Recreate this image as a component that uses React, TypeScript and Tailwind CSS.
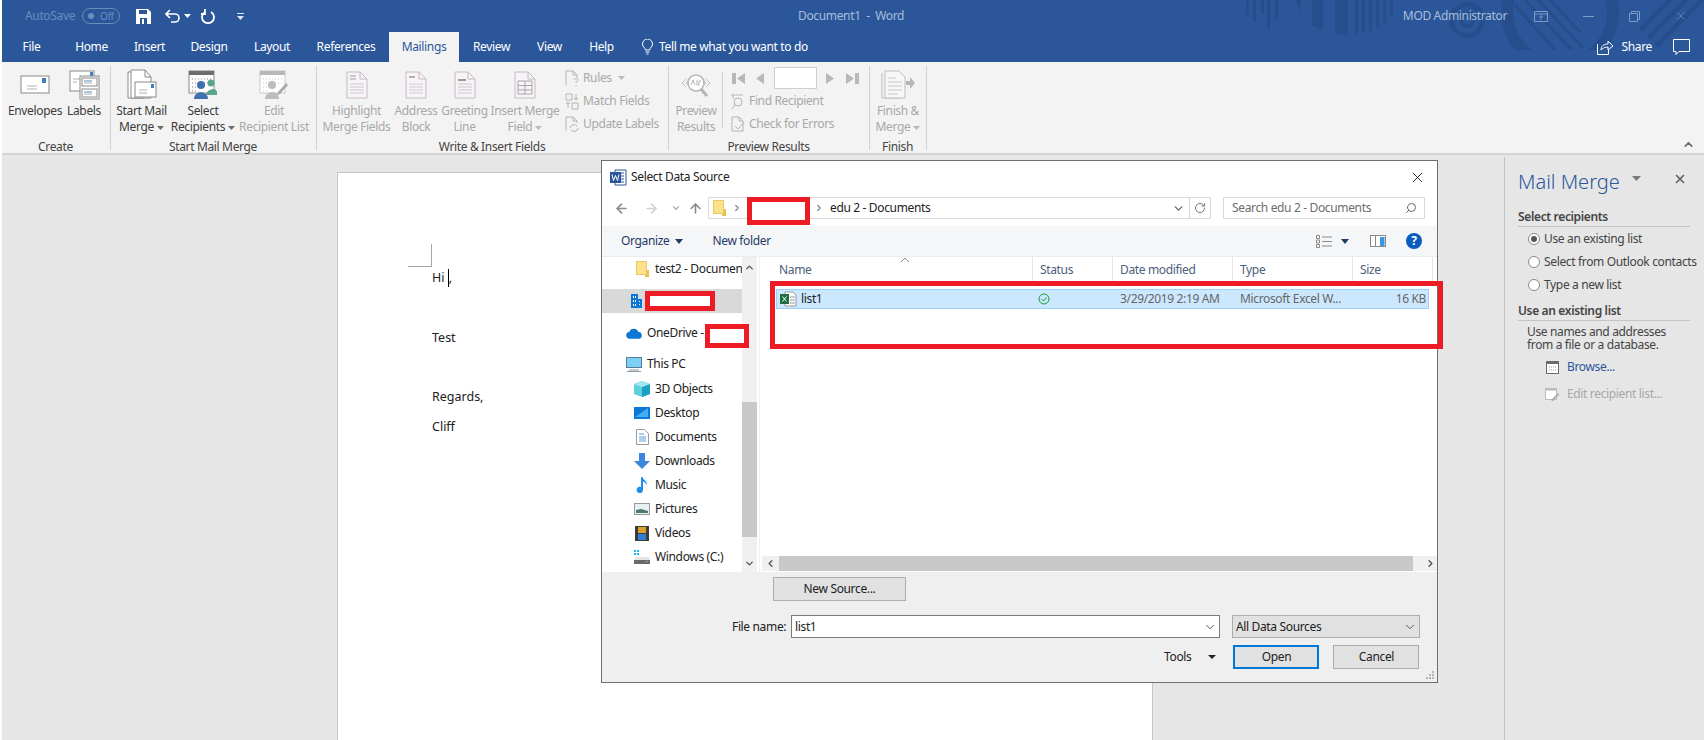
import type { ReactNode } from 'react';
import { ChevronDown, ChevronUp, ChevronLeft, ChevronRight, ArrowLeft, ArrowRight, ArrowUp, RotateCw, Search, X } from 'lucide-react';

function Caret({ color = '#8a8a8a' }: { color?: string }) {
  return (
    <svg width="7" height="4" viewBox="0 0 7 4" className="inline-block ml-[3px] align-middle">
      <path d="M0 0h7L3.5 4z" fill={color} />
    </svg>
  );
}

function EnvelopeIcon() {
  return (
    <svg width="30" height="20" viewBox="0 0 30 20">
      <rect x="1" y="1" width="28" height="17" fill="#fff" stroke="#8a8a8a" />
      <rect x="22" y="3" width="4" height="5" fill="#3f7fc1" />
      <path d="M7 11h10M7 14h10" stroke="#b0b0b0" />
    </svg>
  );
}

function LabelsIcon() {
  return (
    <svg width="31" height="30" viewBox="0 0 31 30">
      <rect x="1" y="1" width="24" height="20" fill="#fff" stroke="#8a8a8a" />
      <rect x="21" y="2" width="3" height="4" fill="#3f7fc1" />
      <path d="M4 9h7M4 12h4" stroke="#b0b0b0" />
      <rect x="11" y="6" width="19" height="23" fill="#fff" stroke="#8a8a8a" />
      <rect x="13" y="8" width="15" height="8" fill="#fff" stroke="#8a8a8a" />
      <rect x="13" y="19" width="15" height="8" fill="#fff" stroke="#8a8a8a" />
      <path d="M15 11h8M15 22h8" stroke="#5b8fc7" />
      <path d="M15 13h8M15 24h8" stroke="#b0b0b0" />
    </svg>
  );
}

function StartMergeIcon() {
  return (
    <svg width="30" height="31" viewBox="0 0 30 31">
      <path d="M1 3h16v26H1z" fill="#fff" stroke="#8a8a8a" />
      <path d="M4 1h14l6 7v21H4z" fill="#fff" stroke="#8a8a8a" />
      <path d="M18 1v7h6" fill="none" stroke="#8a8a8a" />
      <rect x="8" y="13" width="21" height="15" fill="#fff" stroke="#8a8a8a" />
      <rect x="24" y="15" width="3" height="4" fill="#3f7fc1" />
      <path d="M12 21h8M12 24h8" stroke="#b0b0b0" />
    </svg>
  );
}

function CalendarPeople({ muted }: { muted?: boolean }) {
  const top = muted ? '#b8b8b8' : '#6e6e6e';
  const edge = muted ? '#c8c8c8' : '#8a8a8a';
  const a = muted ? '#bdbdbd' : '#3f71b0';
  const b = muted ? '#bdbdbd' : '#5aa58d';
  return (
    <svg width="30" height="29" viewBox="0 0 30 29">
      <rect x="1" y="1" width="25" height="22" fill="#fff" stroke={edge} />
      <rect x="1" y="1" width="25" height="4" fill={top} />
      <path d="M4 9h20M4 13h20M4 17h12M4 21h6" stroke={edge} strokeDasharray="1 2" />
      {!muted && <circle cx="23" cy="13" r="3.500" fill={b} />}
      {!muted && <path d="M18 25c0-5 10-9 11-3v3H18z" fill={b} />}
      <circle cx="13" cy="15" r="4" fill={a} />
      <path d="M6 29c0-9 14-9 14 0z" fill={a} />
      {muted && <path d="M19 22l8-9 2 2-8 9-3 1z" fill="#a9a9a9" />}
    </svg>
  );
}

function DocIcon({ kind }: { kind: 'highlight' | 'address' | 'greeting' | 'field' }) {
  return (
    <svg width="22" height="28" viewBox="0 0 22 28">
      <path d="M1 1h13l7 7v19H1z" fill="#f7f3f7" stroke="#c4bcc4" />
      <path d="M14 1v7h7" fill="none" stroke="#c4bcc4" />
      {kind === 'highlight' && <path d="M4 5h6M4 8h6" stroke="#c9c9c9" strokeWidth="2" />}
      {kind === 'address' && <path d="M4 6h6" stroke="#b0b0b0" strokeWidth="2" />}
      {kind === 'greeting' && <path d="M4 9h8" stroke="#9a9a9a" strokeWidth="2" />}
      {kind !== 'field' && <path d="M4 13h14M4 16h14M4 19h14M4 22h14" stroke="#cfc8cf" />}
      {kind === 'field' && <path d="M4 10h14v13H4zM4 14.500h14M4 19h14M11 10v13" fill="none" stroke="#aaa4aa" />}
    </svg>
  );
}

function PreviewIcon() {
  return (
    <svg width="32" height="24" viewBox="0 0 32 24">
      <circle cx="16" cy="10" r="8" fill="#fff" stroke="#b4b4b4" strokeWidth="1.500" />
      <path d="M21 16l6 7" stroke="#b4b4b4" strokeWidth="3" />
      <path d="M6 6l-4 4 4 4M10 6l-4 4 4 4M26 6l4 4-4 4M22 6l4 4-4 4" fill="none" stroke="#c0c0c0" />
      <path d="M11 12l2-5 2 5M17 7v5h2M21 8h-2v4" fill="none" stroke="#b4b4b4" />
    </svg>
  );
}

function FinishIcon() {
  return (
    <svg width="34" height="29" viewBox="0 0 34 29">
      <path d="M1 3v25h18" fill="none" stroke="#bdbdbd" />
      <path d="M4 1h14l6 6v21H4z" fill="#f7f7f7" stroke="#bdbdbd" />
      <path d="M7 8h8M7 12h14M7 16h14M7 20h14M7 24h10" stroke="#c8c8c8" />
      <path d="M25 11h4V7l5 6-5 6v-4h-4z" fill="#b5b5b5" />
    </svg>
  );
}

function SmallIcon({ d }: { d: string }) {
  return (
    <svg width="16" height="18" viewBox="0 0 16 18" className="shrink-0">
      <path d={d} fill="none" stroke="#b4b4b4" />
    </svg>
  );
}

function BigButton({ w, icon, lines, off, caret }: { w: string; icon: ReactNode; lines: [string, string]; off?: boolean; caret?: boolean }) {
  return (
    <div className={`${w} flex flex-col items-center shrink-0 whitespace-nowrap ${off ? 'text-[#a8a8a8]' : 'text-[#3c3c3c]'}`}>
      <div className="h-[37px] flex items-center justify-center">{icon}</div>
      <div className="leading-[16px] h-[16px]">{lines[0]}</div>
      <div className="leading-[16px] h-[16px]">
        {lines[1]}
        {caret && <Caret color={off ? '#b8b8b8' : '#6a6a6a'} />}
      </div>
    </div>
  );
}

function Group({ w, label, children }: { w: string; label: string; children: ReactNode }) {
  return (
    <div className={`${w} h-[84px] flex flex-col border-r border-[#d2d2d2] shrink-0`}>
      <div className="flex-1 flex min-h-0">{children}</div>
      <div className="h-[16px] -mb-[5px] leading-[16px] text-center text-[#444] whitespace-nowrap pr-[1px]">{label}</div>
    </div>
  );
}

function SmallRow({ icon, text, caret, pl }: { icon: ReactNode; text: string; caret?: boolean; pl: string }) {
  return (
    <div className={`h-[23px] flex items-center gap-[3px] text-[#a8a8a8] whitespace-nowrap ${pl}`}>
      {icon}
      <span>{text}</span>
      {caret && <Caret color="#b8b8b8" />}
    </div>
  );
}

function Ribbon() {
  return (
    <div className="h-[93px] shrink-0 bg-[#f3f3f3] flex pt-[4px] border-b-2 border-[#d4d4d4]">
      <Group w="w-[109px]" label="Create">
        <div className="w-[3px]" />
        <BigButton w="w-[60px]" icon={<EnvelopeIcon />} lines={['Envelopes', '']} />
        <BigButton w="w-[38px]" icon={<LabelsIcon />} lines={['Labels', '']} />
      </Group>
      <Group w="w-[206px]" label="Start Mail Merge">
        <BigButton w="w-[61px]" icon={<StartMergeIcon />} lines={['Start Mail', 'Merge']} caret />
        <BigButton w="w-[62px]" icon={<CalendarPeople />} lines={['Select', 'Recipients']} caret />
        <BigButton w="w-[80px]" icon={<CalendarPeople muted />} lines={['Edit', 'Recipient List']} off />
      </Group>
      <Group w="w-[352px]" label="Write & Insert Fields">
        <div className="w-[5px]" />
        <BigButton w="w-[69px]" icon={<DocIcon kind="highlight" />} lines={['Highlight', 'Merge Fields']} off />
        <BigButton w="w-[50px]" icon={<DocIcon kind="address" />} lines={['Address', 'Block']} off />
        <BigButton w="w-[47px]" icon={<DocIcon kind="greeting" />} lines={['Greeting', 'Line']} off />
        <div className="w-[2px]" />
        <BigButton w="w-[70px]" icon={<DocIcon kind="field" />} lines={['Insert Merge', 'Field']} off caret />
        <div className="flex flex-col w-[100px]">
          <SmallRow pl="pl-[4px]" icon={<SmallIcon d="M2 16V2h7l4 4v3M9 2v4h4M10 11c0-2 4-2 4 0 0 1.500-2 1.500-2 3M12 16v1.500" />} text="Rules" caret />
          <SmallRow pl="pl-[4px]" icon={<SmallIcon d="M2 2h6v6H2zM8 11h6v6H8zM12 2v6l-2-2M12 8l2-2M4 16v-6l-2 2M4 10l2 2" />} text="Match Fields" />
          <SmallRow pl="pl-[4px]" icon={<SmallIcon d="M2 16V2h7l4 4v2M9 2v4h4M6 13a4 4 0 0 1 7-2M14 13a4 4 0 0 1-7 2" />} text="Update Labels" />
        </div>
      </Group>
      <Group w="w-[201px]" label="Preview Results">
        <div className="w-[6px]" />
        <BigButton w="w-[42px]" icon={<PreviewIcon />} lines={['Preview', 'Results']} off />
        <div className="w-px h-[56px] bg-[#d2d2d2] ml-[5px] mt-[6px]" />
        <div className="flex flex-col ml-[7px]">
          <div className="h-[23px] flex items-center">
            <svg width="130" height="22" viewBox="0 0 130 22">
              <path d="M2 6h4v11H2zM15 6v11l-8-5.500zM34 6v11l-8-5.500z" fill="#b8b8b8" />
              <rect x="44.500" y="0.500" width="42" height="21" fill="#fff" stroke="#cfcfcf" />
              <path d="M96 6v11l8-5.500zM116 6v11l8-5.500zM125 6h4v11h-4z" fill="#b8b8b8" />
            </svg>
          </div>
          <SmallRow pl="pl-0" icon={<SmallIcon d="M1 3h12M3 3v4M8 6a4 4 0 1 1 0 8 4 4 0 0 1 0-8zM5 13l-3 4" />} text="Find Recipient" />
          <SmallRow pl="pl-0" icon={<SmallIcon d="M2 16V2h7l4 4v10zM9 2v4h4M5 11l3 3 6-7" />} text="Check for Errors" />
        </div>
      </Group>
      <Group w="w-[57px]" label="Finish">
        <BigButton w="w-[56px]" icon={<FinishIcon />} lines={['Finish &', 'Merge']} off caret />
      </Group>
      <div className="ml-auto self-end mb-[2px] mr-[9px]">
        <ChevronUp size={13} strokeWidth={3} color="#6a6a6a" />
      </div>
    </div>
  );
}

function TitlePattern() {
  return (
    <svg width="464" height="50" viewBox="0 0 464 50" className="absolute right-0 top-0">
      <g fill="#264e8d">
        <path d="M6 0h3v15H6zM13 0h3v22h-3zM21 0h3v14h-3zM27 0h3v30h-3zM35 0h3v19h-3zM55 0l6 12V0z" />
        <path d="M72 0h11v30l-11-5zM95 0h13v35l-13-1zM115 0h3v34h-3zM122 0h3v33h-3zM129 0h3v31h-3zM136 0h3v27h-3zM143 0h3v23h-3zM150 0h3v16h-3z" />
      </g>
      <g fill="none" stroke="#264e8d">
        <circle cx="227" cy="20" r="15.500" strokeWidth="5" />
        <circle cx="227" cy="20" r="6" strokeWidth="4" />
        <circle cx="320" cy="12" r="53" strokeWidth="12" />
        <path d="M275 5l40 45M285 0l47 50M298 0l45 48M310 0l30 32" strokeWidth="3" />
        <path d="M400 30l32-32M408 38l42-42M416 46l48-48" strokeWidth="5" />
      </g>
    </svg>
  );
}

function Header() {
  return (
    <div className="relative bg-[#2b579a] text-white overflow-hidden shrink-0">
      <TitlePattern />
      <div className="relative h-[32px] flex items-center">
        <div className="w-[796px] flex items-center shrink-0">
          <span className="ml-[23px] text-[#6a8cbd]">AutoSave</span>
          <div className="ml-[7px] w-[38px] h-[16px] rounded-full border border-[#6a8cbd] flex items-center pl-[5px] gap-[6px] text-[10px] text-[#6a8cbd]">
            <span className="w-[6px] h-[6px] rounded-full bg-[#6a8cbd]" />
            <span>Off</span>
          </div>
          <svg width="15" height="15" viewBox="0 0 15 15" className="ml-[16px]">
            <path d="M0 0h12l3 3v12H0z" fill="#fff" />
            <path d="M3 1h8v4H3zM4 9h7v6H4z" fill="#2b579a" />
            <path d="M6 10h2v5H6z" fill="#fff" />
          </svg>
          <svg width="16" height="14" viewBox="0 0 16 14" className="ml-[14px]" fill="none" stroke="#fff" strokeWidth="1.600">
            <path d="M5 1L1 5l4 4M1 5h9a4 4 0 0 1 0 8H6" />
          </svg>
          <Caret color="#fff" />
          <svg width="14" height="15" viewBox="0 0 14 15" className="ml-[10px]" fill="none" stroke="#fff" strokeWidth="1.800">
            <path d="M10 3a6 6 0 1 1-6 0M4 0v5H0" />
          </svg>
          <svg width="7" height="7" viewBox="0 0 7 7" className="ml-[22px]">
            <path d="M0 0h7v1H0zM0 3h7L3.500 7z" fill="#dce6f3" />
          </svg>
        </div>
        <span className="text-[#a9bcda] whitespace-nowrap w-[108px]">Document1 &nbsp;-&nbsp; Word</span>
        <span className="ml-auto text-[#a9bcda] whitespace-nowrap">MOD Administrator</span>
        <svg width="14" height="11" viewBox="0 0 14 11" className="ml-[27px]" fill="none" stroke="#7f9cc6">
          <path d="M.5.500h13v10H.5zM.5 3h13M7 9V4.500M5 6.500l2-2 2 2" />
        </svg>
        <div className="ml-[35px] w-[11px] h-px bg-[#7f9cc6]" />
        <svg width="11" height="11" viewBox="0 0 11 11" className="ml-[35px]" fill="none" stroke="#7f9cc6">
          <path d="M.5 2.500h8v8h-8zM2.500 2.500v-2h8v8h-2" />
        </svg>
        <X size={14} strokeWidth={1} color="#7f9cc6" className="ml-[34px] mr-[16px]" />
      </div>
      <div className="relative h-[30px] flex items-center text-center">
        <div className="w-[59px]">File</div>
        <div className="w-[61px]">Home</div>
        <div className="w-[55px]">Insert</div>
        <div className="w-[64px]">Design</div>
        <div className="w-[62px]">Layout</div>
        <div className="w-[86px]">References</div>
        <div className="w-[70px] h-full bg-[#f3f3f3] text-[#2b579a] flex items-center justify-center">Mailings</div>
        <div className="w-[65px]">Review</div>
        <div className="w-[51px]">View</div>
        <div className="w-[53px]">Help</div>
        <svg width="11" height="16" viewBox="0 0 11 16" className="ml-[14px]" fill="none" stroke="#fff">
          <path d="M3.500 11C3 8.500.5 8 .5 5a5 5 0 0 1 10 0c0 3-2.500 3.500-3 6zM3.500 13h4M4.500 15h2" />
        </svg>
        <span className="ml-[6px] whitespace-nowrap">Tell me what you want to do</span>
        <div className="ml-auto flex items-center">
          <svg width="17" height="16" viewBox="0 0 17 16" fill="none" stroke="#fff">
            <path d="M.5 5v10.500h11V11M4 11c0-4 3-6 7-6V2l5 5-5 4V8c-3 0-5 1-7 3z" />
          </svg>
          <span className="ml-[8px]">Share</span>
          <svg width="17" height="16" viewBox="0 0 17 16" fill="none" stroke="#fff" className="ml-[21px] mr-[14px]">
            <path d="M.5.500h16v12H6L3 15.500v-3H.5z" />
          </svg>
        </div>
      </div>
    </div>
  );
}

function FolderIcon() {
  return (
    <svg width="13" height="16" viewBox="0 0 13 16" className="shrink-0">
      <path d="M0 0h11v14H0z" fill="#fde08a" />
      <path d="M11 9h2v7H9v-2h2z" fill="#e8c14a" />
      <path d="M.5.500h10v13H.5z" fill="none" stroke="#e6c869" />
    </svg>
  );
}

const navIcons: Record<string, ReactNode> = {
  building: (
    <svg width="11" height="14" viewBox="0 0 11 14">
      <path d="M0 0h7v14H0zM7 5h4v9H7z" fill="#0a78d4" />
      <path d="M2 2h1v2H2zM4 2h1v2H4zM2 6h1v2H2zM4 6h1v2H4zM2 10h1v2H2zM4 10h1v2H4zM8 7h1v1H8zM8 10h1v1H8z" fill="#fff" />
    </svg>
  ),
  onedrive: (
    <svg width="17" height="11" viewBox="0 0 17 11">
      <path d="M4 11a3.500 3.500 0 0 1-.5-7A5 5 0 0 1 13 4a3.500 3.500 0 0 1 .5 7z" fill="#0a78d4" />
    </svg>
  ),
  pc: (
    <svg width="16" height="15" viewBox="0 0 16 15">
      <rect x="0.500" y="0.500" width="15" height="10" fill="#7dd0f5" stroke="#5a7d95" />
      <path d="M3 13h10M1 14.500h14" stroke="#8c9aa5" />
    </svg>
  ),
  cube: (
    <svg width="16" height="16" viewBox="0 0 16 16">
      <path d="M8 0l8 3v10l-8 3-8-3V3z" fill="#5fd0e0" />
      <path d="M8 6l8-3v10l-8 3z" fill="#1d9fc2" />
      <path d="M8 6L0 3l8-3 8 3z" fill="#a3e6ef" />
    </svg>
  ),
  desktop: (
    <svg width="16" height="13" viewBox="0 0 16 13">
      <rect width="16" height="12" fill="#0a78d4" />
      <path d="M1 10L14 1v9z" fill="#43aef2" />
    </svg>
  ),
  documents: (
    <svg width="13" height="16" viewBox="0 0 13 16">
      <path d="M.5.500h8l4 4v11H.5z" fill="#fff" stroke="#9a9a9a" />
      <path d="M3 5h5M3 8h7M3 10h7M3 12h7" stroke="#5aa0d8" />
    </svg>
  ),
  downloads: (
    <svg width="16" height="16" viewBox="0 0 16 16">
      <path d="M5 0h6v8h5l-8 8-8-8h5z" fill="#3a86d8" />
    </svg>
  ),
  music: (
    <svg width="12" height="16" viewBox="0 0 12 16">
      <path d="M5 0h1.500c.5 3 5 4 4.500 8-1-2-2.500-3-4-3.500V13a3.200 3.200 0 1 1-2-3z" fill="#1e90e8" />
    </svg>
  ),
  pictures: (
    <svg width="16" height="12" viewBox="0 0 16 12">
      <rect x="0.500" y="0.500" width="15" height="11" fill="#e6f0f5" stroke="#9a9a9a" />
      <path d="M2 7l5-1 7 2v2H2z" fill="#4d7a6a" />
    </svg>
  ),
  videos: (
    <svg width="14" height="15" viewBox="0 0 14 15">
      <rect width="14" height="15" fill="#3c3c3c" />
      <path d="M3 1h8v6H3z" fill="#e0a030" />
      <path d="M3 8h8v6H3z" fill="#2f7fd0" />
    </svg>
  ),
  drive: (
    <svg width="16" height="14" viewBox="0 0 16 14">
      <path d="M0 0h2v2H0zM3 0h2v2H3zM0 3h2v2H0zM3 3h2v2H3z" fill="#19b6f0" />
      <path d="M2 7h13l1 3v4H0v-4z" fill="#e4e4e4" />
      <path d="M0 10h16v4H0z" fill="#6a6a6a" />
      <path d="M12 11h2v1h-2z" fill="#5fd068" />
    </svg>
  ),
};

function NavRow({ icon, text, sub, mt, selected }: { icon?: ReactNode; text: string; sub?: boolean; mt?: string; selected?: boolean }) {
  return (
    <div className={`h-[24px] shrink-0 flex items-center gap-[5px] whitespace-nowrap overflow-hidden text-[#222] ${sub ? 'pl-[32px]' : 'pl-[24px]'} ${mt ?? ''} ${selected ? 'bg-[#d9d9d9]' : ''}`}>
      <span className="w-[16px] flex justify-center shrink-0">{icon}</span>
      <span>{text}</span>
    </div>
  );
}

function NavPane() {
  return (
    <div className="w-[140px] shrink-0 flex flex-col overflow-hidden">
      <NavRow sub icon={<FolderIcon />} text="test2 - Documents" />
      <NavRow icon={<span className="ml-[5px]">{navIcons.building}</span>} text="" mt="mt-[8px]" selected />
      <NavRow icon={navIcons.onedrive} text="OneDrive -" mt="mt-[8px]" />
      <NavRow icon={navIcons.pc} text="This PC" mt="mt-[7px]" />
      <NavRow sub icon={navIcons.cube} text="3D Objects" mt="mt-px" />
      <NavRow sub icon={navIcons.desktop} text="Desktop" />
      <NavRow sub icon={navIcons.documents} text="Documents" />
      <NavRow sub icon={navIcons.downloads} text="Downloads" />
      <NavRow sub icon={navIcons.music} text="Music" />
      <NavRow sub icon={navIcons.pictures} text="Pictures" />
      <NavRow sub icon={navIcons.videos} text="Videos" />
      <NavRow sub icon={navIcons.drive} text="Windows (C:)" />
    </div>
  );
}

function FileColumns({ children }: { children: ReactNode }) {
  return <div className="flex h-full whitespace-nowrap">{children}</div>;
}

function FilePane() {
  const head = 'h-full flex items-center pl-[7px] pt-px border-r border-[#e5e5e5]';
  return (
    <div className="flex-1 flex flex-col ml-[2px] border-l border-[#f0f0f0] relative">
      <div className="h-[24px] pl-[16px] text-[#4c607a] relative">
        <FileColumns>
          <div className="w-[257px] h-full flex items-center pl-[3px] pt-px border-r border-[#e5e5e5]">Name</div>
          <div className={`w-[80px] ${head}`}>Status</div>
          <div className={`w-[120px] ${head}`}>Date modified</div>
          <div className={`w-[120px] ${head}`}>Type</div>
          <div className={`w-[80px] ${head}`}>Size</div>
        </FileColumns>
        <svg width="8" height="4" viewBox="0 0 8 4" className="absolute left-[141px] top-[1px]">
          <path d="M0 4l4-4 4 4" fill="none" stroke="#8a8a8a" />
        </svg>
      </div>
      <div className="mt-[8px] ml-[16px] w-[653px] h-[20px] bg-[#cce8ff] border border-[#99d1ff] text-[#666] box-border">
        <FileColumns>
          <div className="w-[256px] flex items-center pl-[3px] gap-[4px] text-[#222]">
            <svg width="17" height="16" viewBox="0 0 17 16" className="shrink-0">
              <path d="M5 1h8l3 3v11H5z" fill="#fff" stroke="#9a9a9a" />
              <path d="M10 6h5M10 9h5M10 12h5" stroke="#9a9a9a" />
              <rect y="3" width="9" height="10" fill="#1d6f42" />
              <path d="M2.500 5.500l4 5M6.500 5.500l-4 5" stroke="#fff" />
            </svg>
            list1
          </div>
          <div className="w-[80px] flex items-center pl-[5px]">
            <svg width="12" height="12" viewBox="0 0 12 12" fill="none" stroke="#1a9a3a">
              <circle cx="6" cy="6" r="5" />
              <path d="M3.500 6l2 2 3-3.500" />
            </svg>
          </div>
          <div className="w-[120px] flex items-center pl-[7px]">3/29/2019 2:19 AM</div>
          <div className="w-[120px] flex items-center pl-[7px]">Microsoft Excel W...</div>
          <div className="flex-1 flex items-center justify-end pr-[2px]">16 KB</div>
        </FileColumns>
      </div>
      <div className="mt-auto mb-px ml-[2px] h-[15px] flex items-center bg-[#f0f0f0]">
        <div className="w-[17px] flex justify-center">
          <ChevronLeft size={11} strokeWidth={3} color="#555" />
        </div>
        <div className="w-[634px] h-full bg-[#c8c8c8]" />
        <div className="flex-1 flex justify-end pr-[1px]">
          <ChevronRight size={11} strokeWidth={3} color="#555" />
        </div>
      </div>
    </div>
  );
}

function Redact({ className }: { className: string }) {
  return <div className={`absolute bg-white border-[5px] border-[#ed1c24] ${className}`} />;
}

function Dialog() {
  return (
    <div className="absolute left-[601px] top-[160px] w-[837px] h-[523px] border border-[#6f6f6f] bg-white flex flex-col">
      <div className="h-[32px] shrink-0 flex items-center pl-[8px] pr-[8px]">
        <svg width="17" height="17" viewBox="0 0 17 17">
          <path d="M5 1h11v15H5z" fill="#fff" stroke="#2b579a" />
          <path d="M8 4h6M8 7h6M8 10h6M8 13h6" stroke="#2b579a" />
          <rect y="3" width="11" height="11" fill="#2b579a" />
          <path d="M2 5.500l1.500 6 2-5 2 5 1.500-6" fill="none" stroke="#fff" />
        </svg>
        <span className="ml-[4px] text-[#222]">Select Data Source</span>
        <X size={17} strokeWidth={1.2} color="#111" className="ml-auto mr-[3px]" />
      </div>
      <div className="h-[33px] shrink-0 flex items-start pt-[4px] pl-[12px]">
        <div className="h-[22px] flex items-center">
          <ArrowLeft size={15} strokeWidth={2.5} color="#8a8a8a" />
          <ArrowRight size={15} strokeWidth={2.5} color="#d0d0d0" className="ml-[15px]" />
          <ChevronDown size={10} strokeWidth={3} color="#b0b0b0" className="ml-[12px]" />
          <ArrowUp size={15} strokeWidth={2.5} color="#8a8a8a" className="ml-[7px]" />
        </div>
        <div className="ml-[5px] w-[503px] h-[22px] border border-[#d9d9d9] flex items-center pl-[4px] shrink-0">
          <FolderIcon />
          <ChevronRight size={10} strokeWidth={3} color="#8a8a8a" className="ml-[6px]" />
          <ChevronRight size={10} strokeWidth={3} color="#8a8a8a" className="ml-[72px]" />
          <span className="ml-[6px] text-[#222] whitespace-nowrap">edu 2 - Documents</span>
          <ChevronDown size={13} strokeWidth={2.5} color="#666" className="ml-auto mr-[4px]" />
          <div className="w-px h-full bg-[#d9d9d9]" />
          <RotateCw size={12} strokeWidth={2} color="#777" className="mx-[4px]" />
        </div>
        <div className="ml-[12px] w-[202px] h-[22px] border border-[#d9d9d9] flex items-center pl-[8px] pr-[7px] text-[#6d6d6d] shrink-0">
          <span>Search edu 2 - Documents</span>
          <Search size={12} strokeWidth={2} color="#666" className="ml-auto -scale-x-100" />
        </div>
      </div>
      <div className="h-[31px] shrink-0 bg-[#f5f6f7] flex items-center border-b border-[#ececec] pl-[19px] text-[#1e3a66]">
        <span>Organize</span>
        <svg width="8" height="5" viewBox="0 0 8 5" className="ml-[6px]">
          <path d="M0 0h8L4 5z" fill="#1e3a66" />
        </svg>
        <span className="ml-[29px]">New folder</span>
        <svg width="17" height="13" viewBox="0 0 17 13" className="ml-auto" fill="none" stroke="#8a8a8a">
          <path d="M.5.500h3v3h-3zM.5 5h3v3h-3zM.5 9.500h3v3h-3zM6 2h10M6 6.500h10M6 11h10" />
        </svg>
        <svg width="8" height="5" viewBox="0 0 8 5" className="ml-[8px]">
          <path d="M0 0h8L4 5z" fill="#1e3a66" />
        </svg>
        <svg width="16" height="12" viewBox="0 0 16 12" className="ml-[21px]">
          <rect x="0.500" y="0.500" width="15" height="11" fill="#fff" stroke="#8a8a8a" />
          <rect x="10" y="2" width="4.500" height="9" fill="#3a96e0" />
          <path d="M5.500 1v10" stroke="#8a8a8a" />
        </svg>
        <div className="ml-[20px] mr-[15px] w-[16px] h-[16px] rounded-full bg-[#0a5cc0] text-white flex items-center justify-center font-bold text-[12px] leading-none">?</div>
      </div>
      <div className="h-[315px] shrink-0 flex">
        <NavPane />
        <div className="w-[15px] shrink-0 flex flex-col bg-[#f0f0f0]">
          <ChevronUp size={11} strokeWidth={3} color="#555" className="mx-auto mt-[4px] h-[13px]" />
          <div className="h-[128px]" />
          <div className="h-[135px] bg-[#c8c8c8]" />
          <ChevronDown size={11} strokeWidth={3} color="#555" className="mx-auto mt-auto mb-[3px]" />
        </div>
        <FilePane />
      </div>
      <div className="flex-1 bg-[#efefef] flex flex-col relative text-[#222]">
        <button className="ml-[171px] mt-[5px] w-[133px] h-[24px] bg-[#e1e1e1] border border-[#adadad]">New Source...</button>
        <div className="mt-[14px] flex items-center h-[23px]">
          <div className="ml-[130px] w-[54px] whitespace-nowrap">File name:</div>
          <div className="ml-[5px] w-[429px] h-full bg-white border border-[#7a7a7a] flex items-center pl-[3px]">
            list1
            <ChevronDown size={14} strokeWidth={1.5} color="#444" className="ml-auto mr-[2px]" />
          </div>
          <div className="ml-[12px] w-[188px] h-full bg-[#e1e1e1] border border-[#adadad] flex items-center pl-[3px]">
            All Data Sources
            <ChevronDown size={14} strokeWidth={1.5} color="#444" className="ml-auto mr-[2px]" />
          </div>
        </div>
        <div className="mt-[7px] flex items-center h-[24px]">
          <span className="ml-[562px]">Tools</span>
          <svg width="8" height="4" viewBox="0 0 8 4" className="ml-[17px]">
            <path d="M0 0h8L4 4z" fill="#222" />
          </svg>
          <button className="ml-[17px] w-[86px] h-full bg-[#e1e1e1] border-2 border-[#0078d7]">Open</button>
          <button className="ml-[14px] w-[86px] h-full bg-[#e1e1e1] border border-[#adadad]">Cancel</button>
        </div>
        <svg width="9" height="9" viewBox="0 0 9 9" className="absolute right-[2px] bottom-[2px]">
          <path d="M6 0h2v2H6zM3 3h2v2H3zM6 3h2v2H6zM0 6h2v2H0zM3 6h2v2H3zM6 6h2v2H6z" fill="#b5b5b5" />
        </svg>
      </div>
      <Redact className="left-[145px] top-[36px] w-[63px] h-[28px]" />
      <Redact className="left-[43px] top-[130px] w-[70px] h-[20px]" />
      <Redact className="left-[103px] top-[163px] w-[44px] h-[24px]" />
      <div className="absolute left-[168px] top-[120px] w-[673px] h-[68px] border-[5px] border-[#ed1c24]" />
    </div>
  );
}

function Radio({ text, on }: { text: string; on?: boolean }) {
  return (
    <div className="h-[23px] flex items-center pl-[10px] gap-[4px] whitespace-nowrap text-[#444]">
      <span className="w-[12px] h-[12px] shrink-0 rounded-full border border-[#8a8a8a] bg-white flex items-center justify-center">
        {on && <span className="w-[6px] h-[6px] rounded-full bg-[#555]" />}
      </span>
      {text}
    </div>
  );
}

function MailMergePane() {
  return (
    <div className="w-[200px] mt-[2px] border-l border-[#c4c4c4] pl-[13px] pr-[14px] text-[#444] shrink-0">
      <div className="h-[46px] flex items-center pt-[3px]">
        <span className="text-[20px] font-light text-[#2b579a] tracking-normal whitespace-nowrap">Mail Merge</span>
        <svg width="9" height="5" viewBox="0 0 9 5" className="ml-[12px] mb-[7px]">
          <path d="M0 0h9L4.500 5z" fill="#7a7a7a" />
        </svg>
        <X size={14} strokeWidth={3} color="#666" className="ml-auto mr-[3px] mb-[5px]" />
      </div>
      <div className="mt-[5px] h-[19px] font-semibold border-b border-[#c4c4c4] leading-[17px]">Select recipients</div>
      <Radio text="Use an existing list" on />
      <Radio text="Select from Outlook contacts" />
      <Radio text="Type a new list" />
      <div className="mt-[6px] h-[19px] font-semibold border-b border-[#c4c4c4] leading-[17px]">Use an existing list</div>
      <div className="mt-[4px] pl-[9px] leading-[13px] whitespace-nowrap">
        Use names and addresses
        <br />
        from a file or a database.
      </div>
      <div className="mt-[3px] h-[26px] pl-[28px] flex items-center gap-[8px] text-[#2b579a]">
        <svg width="13" height="13" viewBox="0 0 13 13">
          <rect x="0.500" y="0.500" width="12" height="12" fill="#fff" stroke="#6a6a6a" />
          <rect x="0.500" y="0.500" width="12" height="2.500" fill="#6a6a6a" />
          <path d="M3 6h8M3 9h8" stroke="#9a9a9a" strokeDasharray="1 1" />
        </svg>
        Browse...
      </div>
      <div className="mt-px h-[26px] pl-[27px] flex items-center gap-[7px] text-[#a8a8a8] whitespace-nowrap">
        <svg width="15" height="15" viewBox="0 0 15 15">
          <rect x="0.500" y="1.500" width="11" height="11" fill="#fff" stroke="#bcbcbc" />
          <rect x="0.500" y="1.500" width="11" height="2" fill="#bcbcbc" />
          <path d="M6 13l7-7 1.500 1.500-7 7z" fill="#b0b0b0" />
        </svg>
        Edit recipient list...
      </div>
    </div>
  );
}

function Page() {
  return (
    <div className="ml-[335px] mt-[17px] w-[816px] bg-white border border-[#c6c6c6] border-b-0 pt-[71px] pl-[94px] text-[#222] text-[12.5px] tracking-normal shrink-0">
      <div className="-ml-[24px] w-[24px] h-[23px] border-r border-b border-[#a6a6a6]" />
      <div className="h-[20px] leading-[20px] mt-px flex items-center">
        Hi&nbsp;<span className="w-px h-[18px] bg-black" />,
      </div>
      <div className="mt-[40px] h-[20px] leading-[20px]">Test</div>
      <div className="mt-[39px] h-[20px] leading-[20px]">Regards,</div>
      <div className="mt-[10px] h-[20px] leading-[20px]">Cliff</div>
    </div>
  );
}

export default function App() {
  return (
    <div className="w-[1704px] h-[740px] overflow-hidden bg-white pl-[2px] font-['Noto_Sans','Open_Sans',sans-serif] text-[12px] tracking-[-0.35px] relative flex flex-col">
      <Header />
      <Ribbon />
      <div className="flex-1 min-h-0 flex bg-[#e6e6e6]">
        <Page />
        <div className="flex-1" />
        <MailMergePane />
      </div>
      <Dialog />
    </div>
  );
}
